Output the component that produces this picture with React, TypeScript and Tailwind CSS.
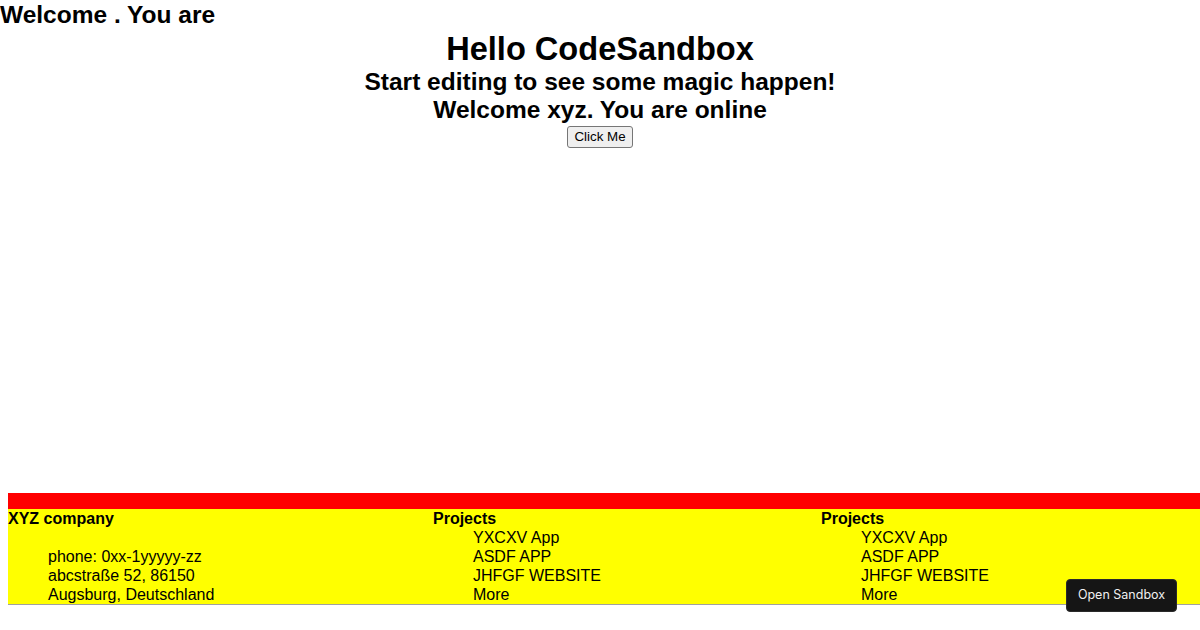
export default function App() {
  const projects = ["YXCXV App", "ASDF APP", "JHFGF WEBSITE", "More"];
  return (
    <div className="relative min-h-[630px] bg-white text-black" style={{ fontFamily: '"Liberation Sans", Arial, sans-serif' }}>
      <h2 className="m-0 text-[24.5px] font-bold leading-[29px]">Welcome . You are</h2>
      <div className="text-center">
        <h1 className="m-0 mt-[1px] text-[32.6px] font-bold leading-[38px]">Hello CodeSandbox</h1>
        <h2 className="m-0 text-[24.5px] font-bold leading-[28px]">Start editing to see some magic happen!</h2>
        <h2 className="m-0 text-[24.5px] font-bold leading-[28px]">Welcome xyz. You are online</h2>
        <button className="rounded-[3px] border border-[#767676] bg-[#efefef] px-[6px] py-[2px] text-[13.33px] leading-[16px]">
          Click Me
        </button>
      </div>
      <footer className="ml-2 mt-[345px] w-[1192px]">
        <div className="h-4 bg-[#ff0000]" />
        <div className="flex bg-[#ffff00] text-[16px] leading-[19px]">
          <div className="w-[425px]">
            <div className="font-bold">XYZ company</div>
            <ul className="m-0 list-none pl-10">
              <li className="h-[19px]"></li>
              <li>phone: 0xx-1yyyyy-zz</li>
              <li>abcstraße 52, 86150</li>
              <li>Augsburg, Deutschland</li>
            </ul>
          </div>
          <div className="w-[388px]">
            <div className="font-bold">Projects</div>
            <ul className="m-0 list-none pl-10">
              {projects.map((p) => (
                <li key={p}>{p}</li>
              ))}
            </ul>
          </div>
          <div className="flex-1">
            <div className="font-bold">Projects</div>
            <ul className="m-0 list-none pl-10">
              {projects.map((p) => (
                <li key={p + "2"}>{p}</li>
              ))}
            </ul>
          </div>
        </div>
        <div className="h-px bg-[#a0a0a0]" />
      </footer>
      <div
        className="absolute left-[1066px] top-[579px] flex h-[33px] w-[111px] items-center justify-center rounded-[4px] border border-[#2a2a2a] bg-[#151515] text-[12.5px] text-[#f0f0f0]"
        style={{ fontFamily: 'Inter, "Noto Sans", sans-serif' }}
      >
        Open Sandbox
      </div>
    </div>
  );
}
